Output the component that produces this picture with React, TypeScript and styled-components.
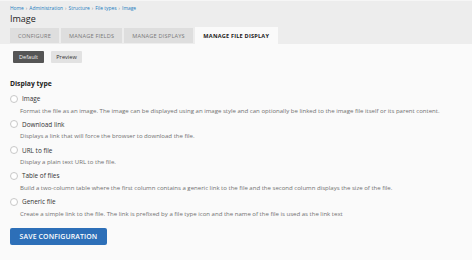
import styled, { createGlobalStyle } from 'styled-components';

const GlobalStyle = createGlobalStyle`
    html, body {
        margin: 0;
        padding: 0;
        background: #ffffff;
    }
    body {
        font-family: "Open Sans", "DejaVu Sans", sans-serif;
        -webkit-font-smoothing: antialiased;
    }
`;

const Page = styled.div`
    width: 472px;
    height: 260px;
    background: #fafafa;
    display: flex;
    flex-direction: column;
`;

const Header = styled.div`
    background: #ededed;
    padding: 4px 10px 0;
    border-top: 1px solid #f6f6f6;
`;

const Breadcrumb = styled.nav`
    display: flex;
    align-items: center;
    gap: 1.5px;
    font-size: 4.9px;
    line-height: 7px;
    height: 7px;
`;

const Crumb = styled.a`
    color: #1a7bc0;
    text-decoration: none;
`;

const Sep = styled.span`
    color: #888;
    font-size: 4.9px;
    padding: 0 0.5px;
`;

const Title = styled.h1`
    margin: 0 0 2px;
    font-size: 9px;
    line-height: 13px;
    font-weight: 400;
    color: #222;
`;

const Tabs = styled.div`
    display: flex;
    align-items: flex-end;
    gap: 2px;
`;

const Tab = styled.div<{ $active?: boolean }>`
    height: ${p => (p.$active ? '17px' : '15px')};
    margin-bottom: ${p => (p.$active ? '0' : '1px')};
    padding: 0 ${p => (p.$active ? '8.5px' : '8px')};
    display: flex;
    align-items: center;
    font-size: 5.6px;
    letter-spacing: 0.2px;
    text-transform: uppercase;
    font-weight: ${p => (p.$active ? 700 : 400)};
    color: ${p => (p.$active ? '#222' : '#7a7a7a')};
    background: ${p => (p.$active ? '#fafafa' : '#dedede')};
`;

const Content = styled.div`
    padding: 7px 10px 0;
    display: flex;
    flex-direction: column;
`;

const SubTabs = styled.div`
    display: flex;
    gap: 7px;
    padding-left: 3px;
`;

const SubTab = styled.div<{ $active?: boolean }>`
    height: 12px;
    width: 31px;
    display: flex;
    align-items: center;
    justify-content: center;
    font-size: 5.6px;
    border-radius: 1px;
    color: ${p => (p.$active ? '#f2f2f2' : '#333')};
    background: ${p => (p.$active ? '#555555' : '#e2e2e2')};
`;

const Legend = styled.div`
    margin-top: 16px;
    font-size: 6.8px;
    line-height: 9px;
    font-weight: 700;
    color: #222;
`;

const Options = styled.div`
    margin-top: 6px;
    display: flex;
    flex-direction: column;
    gap: 5.3px;
`;

const Option = styled.div`
    display: flex;
    flex-direction: column;
`;

const OptionLabel = styled.label`
    display: flex;
    align-items: center;
    gap: 4px;
    height: 9px;
    font-size: 6.4px;
    color: #333;
`;

const Radio = styled.span`
    width: 6px;
    height: 6px;
    border-radius: 50%;
    border: 0.7px solid #c8c8c8;
    background: #fff;
    flex-shrink: 0;
`;

const Description = styled.div`
    margin-top: 3.5px;
    padding-left: 10px;
    font-size: 6.05px;
    line-height: 8px;
    color: #707070;
    white-space: nowrap;
`;

const SaveButton = styled.button`
    margin-top: 10px;
    align-self: flex-start;
    width: 97px;
    height: 17px;
    border: none;
    border-radius: 2px;
    background: #2d6fb8;
    color: #fff;
    font-family: inherit;
    font-size: 6.9px;
    font-weight: 600;
    letter-spacing: 0.15px;
    text-transform: uppercase;
    padding: 0;
`;

const crumbs = ['Home', 'Administration', 'Structure', 'File types', 'Image'];

const tabs = [
    { label: 'Configure' },
    { label: 'Manage fields' },
    { label: 'Manage displays' },
    { label: 'Manage file display', active: true },
];

const options = [
    {
        label: 'Image',
        desc: 'Format the file as an image. The image can be displayed using an image style and can optionally be linked to the image file itself or its parent content.',
    },
    {
        label: 'Download link',
        desc: 'Displays a link that will force the browser to download the file.',
    },
    {
        label: 'URL to file',
        desc: 'Display a plain text URL to the file.',
    },
    {
        label: 'Table of files',
        desc: 'Build a two-column table where the first column contains a generic link to the file and the second column displays the size of the file.',
    },
    {
        label: 'Generic file',
        desc: 'Create a simple link to the file. The link is prefixed by a file type icon and the name of the file is used as the link text',
    },
];

const App = () => {
    return (
        <>
            <GlobalStyle />
            <Page>
                <Header>
                    <Breadcrumb>
                        {crumbs.map((c, i) => (
                            <span key={c} style={{ display: 'contents' }}>
                                {i > 0 && <Sep>›</Sep>}
                                <Crumb href="#">{c}</Crumb>
                            </span>
                        ))}
                    </Breadcrumb>
                    <Title>Image</Title>
                    <Tabs>
                        {tabs.map(t => (
                            <Tab key={t.label} $active={t.active}>{t.label}</Tab>
                        ))}
                    </Tabs>
                </Header>
                <Content>
                    <SubTabs>
                        <SubTab $active>Default</SubTab>
                        <SubTab>Preview</SubTab>
                    </SubTabs>
                    <Legend>Display type</Legend>
                    <Options>
                        {options.map(o => (
                            <Option key={o.label}>
                                <OptionLabel>
                                    <Radio />
                                    {o.label}
                                </OptionLabel>
                                <Description>{o.desc}</Description>
                            </Option>
                        ))}
                    </Options>
                    <SaveButton>Save configuration</SaveButton>
                </Content>
            </Page>
        </>
    );
};

export default App;
